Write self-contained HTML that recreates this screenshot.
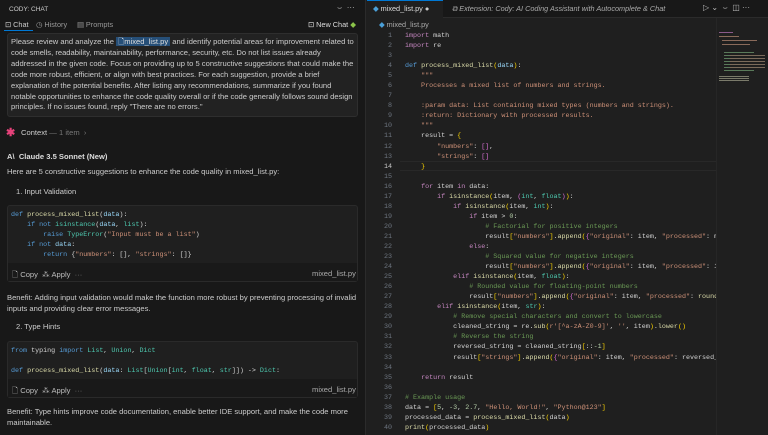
<!DOCTYPE html>
<html><head><meta charset="utf-8"><style>
*{margin:0;padding:0;box-sizing:border-box}
body{width:768px;height:435px;overflow:hidden;background:#1f1f1f;font-family:"Liberation Sans",sans-serif;color:#ccc;position:relative}
.a{position:absolute;white-space:nowrap}
#left{position:absolute;left:0;top:0;width:366px;height:435px;background:#181818;border-right:1px solid #2b2b2b}
.t{font-size:7.6px;color:#cccccc}
.mono{font-family:"Liberation Mono",monospace;font-size:6.7px}
.k{color:#c586c0}.d{color:#569cd6}.f{color:#dcdcaa}.s{color:#ce9178}.c{color:#6a9955}.v{color:#9cdcfe}.ty{color:#4ec9b0}.n{color:#b5cea8}.g{color:#ffd700}.p{color:#da70d6}.b{color:#179fff}.w{color:#d4d4d4}
.code{position:absolute;left:405px;top:31px;line-height:10.05px;white-space:pre;color:#d4d4d4}
.ln{position:absolute;left:372px;top:31px;width:20px;text-align:right;line-height:10.05px;color:#6e7681;white-space:pre}
.blk{position:absolute;left:7px;width:351px;background:#1f1f1f;border:1px solid #2a2a2a;border-radius:3px}
.bf{position:absolute;left:0;right:0;bottom:0;height:18px;background:#191919}
</style></head><body>
<div id="left">
<div class="a" style="left:9px;top:6px;font-size:6.5px;color:#ccc">CODY: CHAT</div>
<div class="a" style="left:337px;top:3px;font-size:8px;color:#bbb">⌣&nbsp;&nbsp;···</div>
<div class="a" style="left:5px;top:20px;font-size:7.3px;color:#ccc">⊡ Chat</div>
<div class="a" style="left:36px;top:20px;font-size:7.3px;color:#999">◷ History</div>
<div class="a" style="left:77px;top:20px;font-size:7.3px;color:#999">▤ Prompts</div>
<div class="a" style="left:4px;top:30px;width:29px;height:1px;background:#0078d4"></div>
<div class="a" style="left:308px;top:20px;font-size:7.3px;color:#ddd">⊡ New Chat <span style="color:#8bc34a">◆</span></div>
<div class="a" style="left:7px;top:33px;width:351px;height:84px;background:#222222;border:1px solid #2e2e2e;border-radius:3px"></div>
<div class="a t" style="left:11px;top:37px;line-height:10.9px;white-space:normal;width:345px">Please review and analyze the <span style="background:#264f78;color:#ddd;padding:0 2px">🗋mixed_list.py</span> and identify potential areas for improvement related to code smells, readability, maintainability, performance, security, etc. Do not list issues already addressed in the given code. Focus on providing up to 5 constructive suggestions that could make the code more robust, efficient, or align with best practices. For each suggestion, provide a brief explanation of the potential benefits. After listing any recommendations, summarize if you found notable opportunities to enhance the code quality overall or if the code generally follows sound design principles. If no issues found, reply "There are no errors."</div>
<div class="a" style="left:6px;top:126px;font-size:11px;color:#e6427a;font-weight:bold">✱</div>
<div class="a t" style="left:21px;top:128px">Context <span style="color:#777">— 1 item &nbsp;›</span></div>
<div class="a t" style="left:7px;top:152px;font-weight:bold;color:#ddd">A\ &nbsp;Claude 3.5 Sonnet (New)</div>
<div class="a t" style="left:7px;top:167px">Here are 5 constructive suggestions to enhance the code quality in mixed_list.py:</div>
<div class="a t" style="left:16px;top:187px">1. Input Validation</div>
<div class="blk" style="top:205px;height:77px"><div class="bf"></div></div>
<div class="a mono" style="left:11px;top:210px;line-height:10px;white-space:pre;color:#d4d4d4"><span class="d">def</span> <span class="f">process_mixed_list</span>(<span class="v">data</span>):
    <span class="d">if not</span> <span class="ty">isinstance</span>(<span class="v">data</span>, <span class="ty">list</span>):
        <span class="d">raise</span> <span class="ty">TypeError</span>(<span class="s">"Input must be a list"</span>)
    <span class="d">if not</span> <span class="v">data</span>:
        <span class="d">return</span> {<span class="s">"numbers"</span>: [], <span class="s">"strings"</span>: []}</div>
<div class="a t" style="left:12px;top:269px;color:#bbb">🗋 Copy &nbsp;⁂ Apply &nbsp;<span style="color:#777">···</span></div>
<div class="a t" style="left:312px;top:269px;color:#aaa">mixed_list.py</div>
<div class="a t" style="left:7px;top:293px;line-height:10.9px;width:356px;white-space:normal">Benefit: Adding input validation would make the function more robust by preventing processing of invalid inputs and providing clear error messages.</div>
<div class="a t" style="left:16px;top:322px">2. Type Hints</div>
<div class="blk" style="top:341px;height:57px"><div class="bf"></div></div>
<div class="a mono" style="left:11px;top:346px;line-height:10px;white-space:pre;color:#d4d4d4"><span class="d">from</span> <span class="w">typing</span> <span class="d">import</span> <span class="ty">List</span>, <span class="ty">Union</span>, <span class="ty">Dict</span>

<span class="d">def</span> <span class="f">process_mixed_list</span>(<span class="v">data</span>: <span class="ty">List</span>[<span class="ty">Union</span>[<span class="ty">int</span>, <span class="ty">float</span>, <span class="ty">str</span>]]) -> <span class="ty">Dict</span>:</div>
<div class="a t" style="left:12px;top:385px;color:#bbb">🗋 Copy &nbsp;⁂ Apply &nbsp;<span style="color:#777">···</span></div>
<div class="a t" style="left:312px;top:385px;color:#aaa">mixed_list.py</div>
<div class="a t" style="left:7px;top:407px;line-height:10.9px;width:356px;white-space:normal">Benefit: Type hints improve code documentation, enable better IDE support, and make the code more maintainable.</div>
</div>
<!-- editor -->
<div class="a" style="left:367px;top:0;width:401px;height:18px;background:#181818;border-bottom:1px solid #2b2b2b"></div>
<div class="a" style="left:367px;top:0;width:76px;height:18px;background:#1f1f1f;border-top:1px solid #0078d4"></div>
<div class="a" style="left:373px;top:4px;font-size:7.3px;color:#ddd"><span style="color:#4a9fd8">◆</span> mixed_list.py <span style="color:#ccc">●</span></div>
<div class="a" style="left:452px;top:4px;font-size:7.3px;color:#aaa;font-style:italic">⧉ Extension: Cody: AI Coding Assistant with Autocomplete &amp; Chat</div>
<div class="a" style="left:703px;top:3px;font-size:8px;color:#bbb">▷ ⌄ &nbsp;⌣ &nbsp;◫ ···</div>
<div class="a" style="left:379px;top:20px;font-size:7.3px;color:#aaa"><span style="color:#4a9fd8">◆</span> mixed_list.py</div>
<div class="a" style="left:400px;top:161px;width:316px;height:10px;border-top:1px solid #282828;border-bottom:1px solid #282828"></div>
<div class="ln mono">1
2
3
4
5
6
7
8
9
10
11
12
13
<span style="color:#ccc">14</span>
15
16
17
18
19
20
21
22
23
24
25
26
27
28
29
30
31
32
33
34
35
36
37
38
39
40</div>
<div class="code mono"><span class="k">import</span> math
<span class="k">import</span> re

<span class="d">def</span> <span class="f">process_mixed_list</span><span class="g">(</span><span class="v">data</span><span class="g">)</span>:
    <span class="s">"""</span>
<span class="s">    Processes a mixed list of numbers and strings.</span>

<span class="s">    :param data: List containing mixed types (numbers and strings).</span>
<span class="s">    :return: Dictionary with processed results.</span>
<span class="s">    """</span>
    result = <span class="g">{</span>
        <span class="s">"numbers"</span>: <span class="p">[]</span>,
        <span class="s">"strings"</span>: <span class="p">[]</span>
    <span class="g">}</span>

    <span class="k">for</span> item <span class="k">in</span> data:
        <span class="k">if</span> <span class="f">isinstance</span><span class="g">(</span>item, <span class="p">(</span><span class="ty">int</span>, <span class="ty">float</span><span class="p">)</span><span class="g">)</span>:
            <span class="k">if</span> <span class="f">isinstance</span><span class="g">(</span>item, <span class="ty">int</span><span class="g">)</span>:
                <span class="k">if</span> item > <span class="n">0</span>:
                    <span class="c"># Factorial for positive integers</span>
                    result<span class="g">[</span><span class="s">"numbers"</span><span class="g">]</span>.<span class="f">append</span><span class="g">(</span><span class="p">{</span><span class="s">"original"</span>: item, <span class="s">"processed"</span>: m
                <span class="k">else</span>:
                    <span class="c"># Squared value for negative integers</span>
                    result<span class="g">[</span><span class="s">"numbers"</span><span class="g">]</span>.<span class="f">append</span><span class="g">(</span><span class="p">{</span><span class="s">"original"</span>: item, <span class="s">"processed"</span>: i
            <span class="k">elif</span> <span class="f">isinstance</span><span class="g">(</span>item, <span class="ty">float</span><span class="g">)</span>:
                <span class="c"># Rounded value for floating-point numbers</span>
                result<span class="g">[</span><span class="s">"numbers"</span><span class="g">]</span>.<span class="f">append</span><span class="g">(</span><span class="p">{</span><span class="s">"original"</span>: item, <span class="s">"processed"</span>: <span class="f">round</span>
        <span class="k">elif</span> <span class="f">isinstance</span><span class="g">(</span>item, <span class="ty">str</span><span class="g">)</span>:
            <span class="c"># Remove special characters and convert to lowercase</span>
            cleaned_string = re.<span class="f">sub</span><span class="g">(</span><span class="s">r'[^a-zA-Z0-9]'</span>, <span class="s">''</span>, item<span class="g">)</span>.<span class="f">lower</span><span class="g">()</span>
            <span class="c"># Reverse the string</span>
            reversed_string = cleaned_string<span class="g">[</span>::<span class="n">-1</span><span class="g">]</span>
            result<span class="g">[</span><span class="s">"strings"</span><span class="g">]</span>.<span class="f">append</span><span class="g">(</span><span class="p">{</span><span class="s">"original"</span>: item, <span class="s">"processed"</span>: reversed_

    <span class="k">return</span> result

<span class="c"># Example usage</span>
data = <span class="g">[</span><span class="n">5</span>, <span class="n">-3</span>, <span class="n">2.7</span>, <span class="s">"Hello, World!"</span>, <span class="s">"Python@123"</span><span class="g">]</span>
processed_data = <span class="f">process_mixed_list</span><span class="g">(</span>data<span class="g">)</span>
<span class="f">print</span><span class="g">(</span>processed_data<span class="g">)</span></div>
<div class="a" style="left:716px;top:18px;width:52px;height:417px;background:#1f1f1f;border-left:1px solid #262626"></div>
<div class="a" style="left:719px;top:32px;width:14px;height:1px;background:#8a5a8a"></div>
<div class="a" style="left:719px;top:36px;width:20px;height:1px;background:#8a6a5a"></div>
<div class="a" style="left:722px;top:40px;width:35px;height:1px;background:#8a6a5a"></div>
<div class="a" style="left:722px;top:44px;width:28px;height:1px;background:#8a6a5a"></div>
<div class="a" style="left:724px;top:52px;width:30px;height:20px;background:repeating-linear-gradient(#5a7a5a 0 1px,transparent 1px 3px)"></div>
<div class="a" style="left:730px;top:55px;width:35px;height:15px;background:repeating-linear-gradient(#7a6a5a 0 1px,transparent 1px 3px)"></div>
<div class="a" style="left:719px;top:76px;width:30px;height:6px;background:repeating-linear-gradient(#7a7a6a 0 1px,transparent 1px 2px)"></div>
</body></html>
